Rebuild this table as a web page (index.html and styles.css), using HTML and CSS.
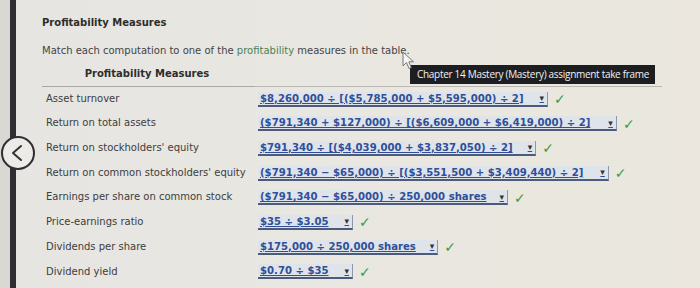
FILE: index.html
```html
<!DOCTYPE html>
<html>
<head>
<meta charset="utf-8">
<link rel="stylesheet" href="styles.css">
</head>
<body>
<div class="screen">
  <div class="edge"></div>
  <div class="bar"></div>
  <div class="back"><svg width="14" height="18" viewBox="0 0 14 18"><path d="M11 2 L3 9 L11 16" fill="none" stroke="#333" stroke-width="2" stroke-linecap="round" stroke-linejoin="round"/></svg></div>
  <main class="content">
    <h1 class="title">Profitability Measures</h1>
    <p class="intro">Match each computation to one of the <span class="term">profitability</span> measures in the table.</p>
    <div class="tip">Chapter 14 Mastery (Mastery) assignment take frame</div>
    <svg class="cursor" width="13" height="19" viewBox="0 0 13 19"><path d="M1 1 L1 15 L4.5 11.5 L7 17.5 L9.3 16.5 L6.8 10.8 L11.5 10.8 Z" fill="#f4f4f4" stroke="#777" stroke-width="1"/></svg>
    <div class="table">
      <div class="head">Profitability Measures</div>
      <div class="head-blank"></div>
      <div class="label">Asset turnover</div>
      <div class="cell"><span class="sel">$8,260,000 ÷ [($5,785,000 + $5,595,000) ÷ 2]<i class="pad w1"></i><span class="arr">▾</span></span><span class="ok">✓</span></div>
      <div class="label">Return on total assets</div>
      <div class="cell"><span class="sel">($791,340 + $127,000) ÷ [($6,609,000 + $6,419,000) ÷ 2]<i class="pad w2"></i><span class="arr">▾</span></span><span class="ok">✓</span></div>
      <div class="label">Return on stockholders' equity</div>
      <div class="cell"><span class="sel">$791,340 ÷ [($4,039,000 + $3,837,050) ÷ 2]<i class="pad w3"></i><span class="arr">▾</span></span><span class="ok">✓</span></div>
      <div class="label">Return on common stockholders' equity</div>
      <div class="cell"><span class="sel">($791,340 − $65,000) ÷ [($3,551,500 + $3,409,440) ÷ 2]<i class="pad w4"></i><span class="arr">▾</span></span><span class="ok">✓</span></div>
      <div class="label">Earnings per share on common stock</div>
      <div class="cell"><span class="sel">($791,340 − $65,000) ÷ 250,000 shares<i class="pad w5"></i><span class="arr">▾</span></span><span class="ok">✓</span></div>
      <div class="label">Price-earnings ratio</div>
      <div class="cell"><span class="sel">$35 ÷ $3.05<i class="pad w6"></i><span class="arr">▾</span></span><span class="ok">✓</span></div>
      <div class="label">Dividends per share</div>
      <div class="cell"><span class="sel">$175,000 ÷ 250,000 shares<i class="pad w7"></i><span class="arr">▾</span></span><span class="ok">✓</span></div>
      <div class="label">Dividend yield</div>
      <div class="cell"><span class="sel">$0.70 ÷ $35<i class="pad w8"></i><span class="arr">▾</span></span><span class="ok">✓</span></div>
    </div>
  </main>
</div>
</body>
</html>
```
FILE: styles.css
```css
* { box-sizing: border-box; }
html, body { margin: 0; padding: 0; }
body {
  width: 700px;
  height: 288px;
  overflow: hidden;
  background: #e8e6e0;
  font-family: "DejaVu Sans", Verdana, sans-serif;
  color: #3a3a3a;
}
.screen {
  position: relative;
  display: flex;
  height: 288px;
  background: linear-gradient(90deg, #e6e5e1 0%, #e9e7e1 50%, #ebe7de 100%);
}
.edge { width: 10px; background: #d9d8d4; }
.bar { width: 6px; background: #2e2e33; }
.back {
  position: absolute;
  left: 1px;
  top: 136px;
  width: 34px;
  height: 34px;
  border-radius: 50%;
  border: 2px solid #2e2e33;
  background: #ecebe7;
  display: flex;
  align-items: center;
  justify-content: center;
  padding-right: 3px;
}
.content {
  position: relative;
  flex: 1;
  padding: 16px 0 0 26px;
}
.title {
  margin: 0;
  font-size: 10px;
  font-weight: bold;
  color: #2d2d2d;
  line-height: 14px;
}
.intro {
  margin: 14px 0 0;
  font-size: 10px;
  line-height: 14px;
  color: #444;
}
.term { color: #4d7f55; }
.tip {
  position: absolute;
  left: 394px;
  top: 65px;
  height: 19px;
  padding: 0 6px 0 7px;
  background: #1d1e22;
  color: #f2f2f2;
  font-family: "Open Sans", "Noto Sans", sans-serif;
  font-size: 10px;
  line-height: 19px;
  letter-spacing: -0.3px;
  z-index: 2;
}
.cursor { position: absolute; left: 386px; top: 51px; z-index: 3; }
.table {
  display: grid;
  grid-template-columns: 212px auto;
  grid-auto-rows: 24.7px;
  margin-top: 4px;
  width: 620px;
}
.head {
  font-size: 10px;
  font-weight: bold;
  color: #2d2d2d;
  text-align: center;
  line-height: 24px;
  border-bottom: 1px solid #a9a8a4;
  padding-right: 2px;
}
.head-blank { border-bottom: 1px solid #b9b8b4; }
.label {
  font-size: 10px;
  line-height: 24px;
  padding-left: 4px;
  color: #3d3d3d;
  white-space: nowrap;
}
.cell {
  display: flex;
  align-items: center;
  gap: 6px;
  padding-left: 4px;
}
.sel {
  display: inline-flex;
  align-items: center;
  height: 15px;
  padding: 0 3px 0 2px;
  background: #dfe3ea;
  border-bottom: 2px solid #4c5a7c;
  border-right: 1px solid #8c96ac;
  color: #2f4f98;
  font-weight: bold;
  font-size: 10.1px;
  text-decoration: underline;
  white-space: pre;
  letter-spacing: 0;
}
.pad { display: inline-block; }
.w1 { width: 16px; }
.w2 { width: 18px; }
.w3 { width: 15px; }
.w4 { width: 17px; }
.w5 { width: 13px; }
.w6 { width: 16px; }
.w7 { width: 14px; }
.w8 { width: 16px; }
.arr {
  color: #333;
  font-size: 9px;
  text-decoration: none;
  display: inline-block;
}
.ok {
  color: #3f9a46;
  font-size: 14px;
  font-weight: bold;
  line-height: 1;
}
```
